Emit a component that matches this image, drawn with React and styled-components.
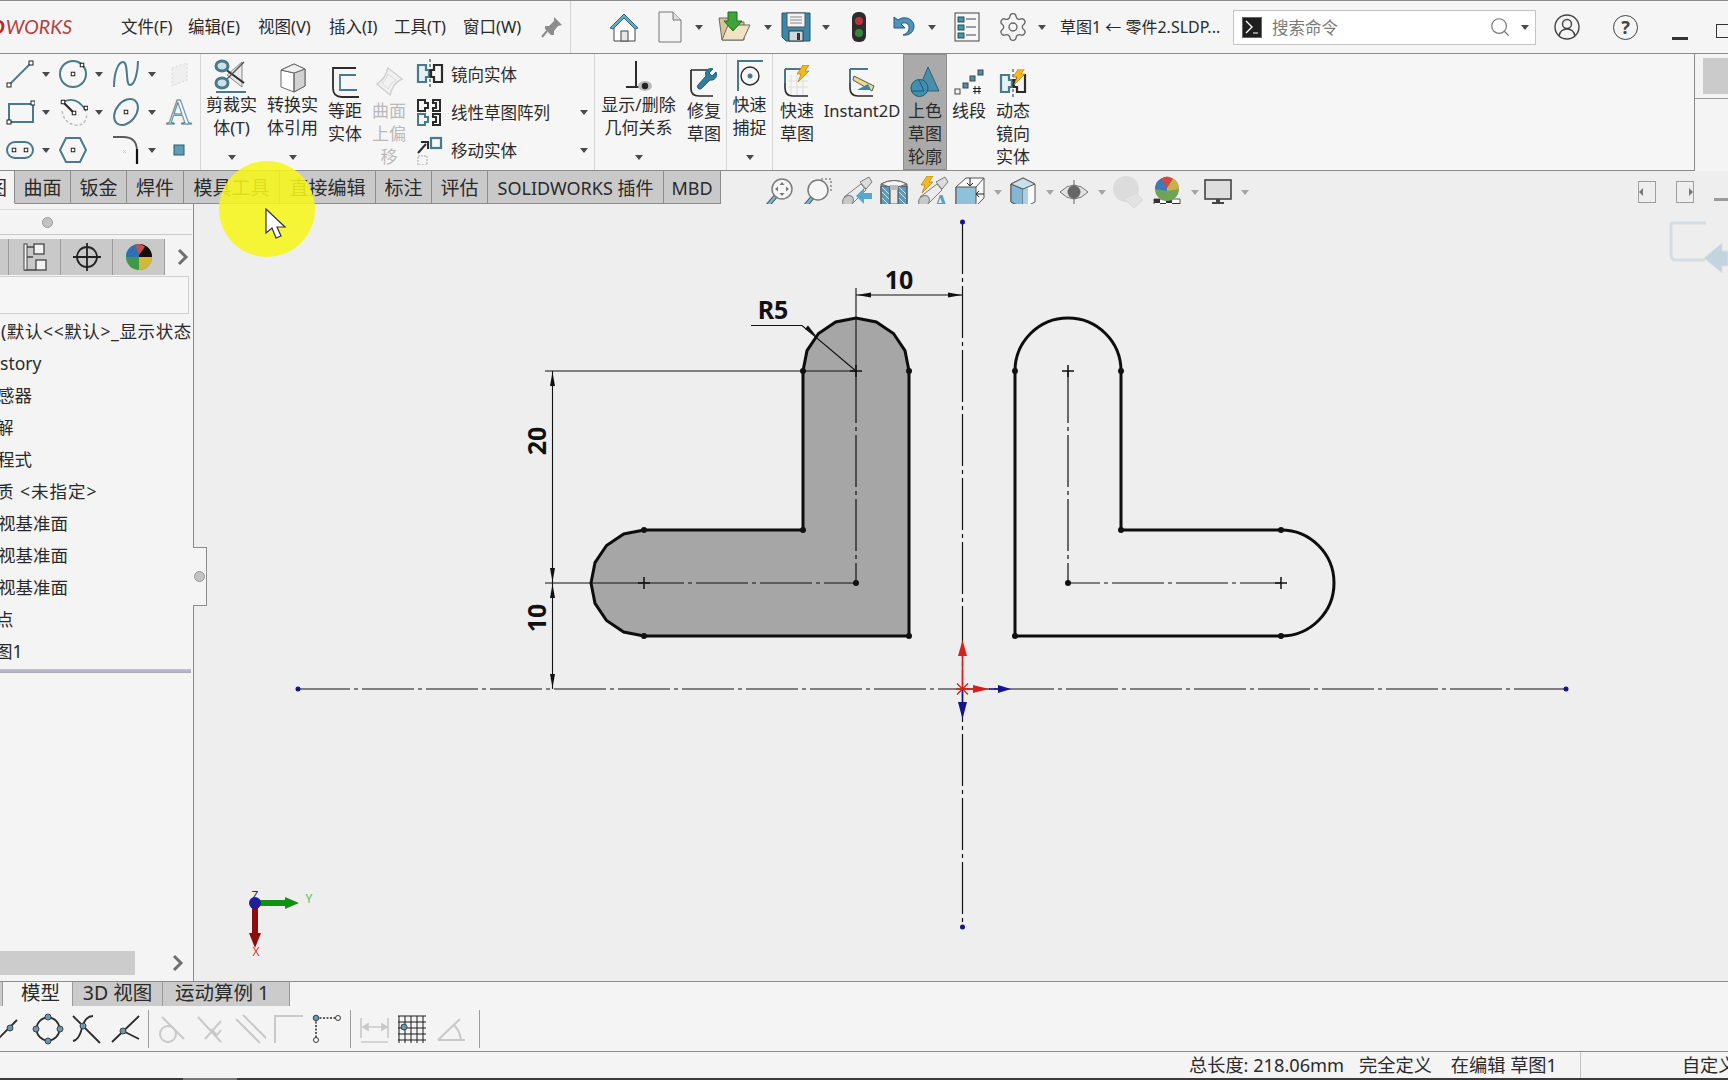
import React from 'react';
import styled, { createGlobalStyle } from 'styled-components';
import { Search, Settings } from 'lucide-react';

const TEAL = '#487a8b';
const DARK = '#2b2b2b';
const FAINT = '#c9c9c9';
const LINE = '#8c8c8c';

const GlobalStyle = createGlobalStyle`
  html, body {
    margin: 0;
    width: 1728px;
    height: 1080px;
    overflow: hidden;
    background: #f4f4f4;
  }
  body {
    font-family: "Noto Sans", "Noto Sans CJK SC", sans-serif;
    color: #2a2a2a;
  }
`;

const Page = styled.div`
  position: relative;
  width: 1728px;
  height: 1080px;
  display: flex;
  flex-direction: column;
  overflow: hidden;
`;

/* ---------- title bar ---------- */
const TitleBar = styled.header`
  box-sizing: border-box;
  height: 54px;
  flex: none;
  display: flex;
  align-items: center;
  border-top: 1px solid ${LINE};
  border-bottom: 1px solid ${LINE};
  background: #f5f5f5;
`;

const Logo = styled.div`
  width: 121px;
  flex: none;
  overflow: hidden;
  font-family: "Lato", sans-serif;
  font-style: italic;
  font-size: 19.5px;
  line-height: 26px;
  color: #b5403f;
  white-space: nowrap;
  b {
    font-weight: 900;
    margin-left: -9px;
    margin-right: 1px;
    color: #c8201f;
  }
`;

const MenuList = styled.nav`
  display: flex;
  width: 450px;
  flex: none;
  height: 52px;
  align-items: center;
  border-right: 1px solid #d2d2d2;
  box-sizing: border-box;
`;

const MenuItem = styled.span`
  width: ${p => p.$w}px;
  flex: none;
  font-size: 16.5px;
  line-height: 24px;
  white-space: nowrap;
`;

const QuickBar = styled.div`
  display: flex;
  align-items: center;
  padding-left: 36px;
  width: 489px;
  flex: none;
  box-sizing: border-box;
`;

const QuickItem = styled.div`
  display: flex;
  align-items: center;
  justify-content: flex-start;
  width: ${p => p.$w}px;
  flex: none;
`;

const Caret = styled.i`
  display: block;
  flex: none;
  width: 0;
  height: 0;
  margin-left: ${p => p.$ml || 0}px;
  border-left: 4px solid transparent;
  border-right: 4px solid transparent;
  border-top: 5px solid ${p => p.$light ? '#a5a5a5' : '#4a4a4a'};
`;

const DocTitle = styled.span`
  width: 173px;
  flex: none;
  font-size: 16px;
  line-height: 24px;
  white-space: nowrap;
  overflow: hidden;
`;

const SearchBox = styled.div`
  box-sizing: border-box;
  width: 303px;
  height: 35px;
  flex: none;
  display: flex;
  align-items: center;
  padding: 0 6px 0 8px;
  background: #fff;
  border: 1px solid #c4c4c4;
`;

const SearchText = styled.span`
  flex: 1;
  padding-left: 10px;
  font-size: 16.5px;
  color: #7a7a7a;
`;

const Prompt = styled.span`
  box-sizing: border-box;
  width: 20px;
  height: 21px;
  flex: none;
  background: #1e1e1e;
  border: 1px solid #666;
  display: flex;
`;

const TitleRight = styled.div`
  display: flex;
  align-items: center;
  padding-left: 18px;
`;

const RoundBtn = styled.span`
  width: 59px;
  flex: none;
  display: flex;
`;

const HelpMark = styled.span`
  box-sizing: border-box;
  width: 25px;
  height: 25px;
  border: 1.5px solid #444;
  border-radius: 50%;
  text-align: center;
  font-size: 18px;
  font-weight: 700;
  line-height: 22px;
  color: #444;
`;

const MinBar = styled.i`
  display: block;
  width: 16px;
  height: 3px;
  margin-top: 22px;
  background: #333;
`;

const MaxBox = styled.i`
  display: block;
  box-sizing: border-box;
  width: 14px;
  height: 14px;
  margin-left: 28px;
  margin-top: 8px;
  border: 1.5px solid #333;
  flex: none;
`;

/* ---------- command manager ---------- */
const RibbonRow = styled.div`
  height: 117px;
  flex: none;
  display: flex;
`;

const Ribbon = styled.section`
  box-sizing: border-box;
  width: 1695px;
  flex: none;
  display: flex;
  background: #f6f6f6;
  border-right: 1px solid ${LINE};
  border-bottom: 1px solid ${LINE};
`;

const RibbonSide = styled.div`
  flex: 1;
  box-sizing: border-box;
  height: 45px;
  padding: 4px 0 4px 8px;
  border-bottom: 1px solid #9a9a9a;
  &::after {
    content: '';
    display: block;
    height: 36px;
    background: #cbcbcb;
  }
`;

const SketchGrid = styled.div`
  box-sizing: border-box;
  width: 201px;
  flex: none;
  display: grid;
  grid-template-columns: 53px 53px 53px 30px;
  grid-auto-rows: 38px;
  padding: 1px 0 0 5px;
  border-right: 1px solid #d6d6d6;
`;

const ToolCell = styled.div`
  display: flex;
  align-items: center;
`;

const RibbonBtn = styled.div`
  box-sizing: border-box;
  width: ${p => p.$w}px;
  flex: none;
  height: 116px;
  display: flex;
  flex-direction: column;
  align-items: center;
  color: ${p => p.$off ? '#b9b9b9' : 'inherit'};
  background: ${p => p.$on ? '#aaaaaa' : 'transparent'};
  outline: ${p => p.$on ? '1px solid #8f8f8f' : 'none'};
  outline-offset: -1px;
  border-right: ${p => p.$sep ? '1px solid #d6d6d6' : '0'};
`;

const IconSlot = styled.div`
  height: ${p => p.$tall ? 45 : 39}px;
  flex: none;
  display: flex;
  align-items: flex-end;
`;

const BtnText = styled.div`
  font-size: ${p => p.$latin ? 16.5 : 17}px;
  line-height: 23px;
  text-align: center;
  white-space: nowrap;
`;

const BtnCaret = styled.div`
  margin-top: auto;
  margin-bottom: 10px;
`;

const SmallCol = styled.div`
  box-sizing: border-box;
  width: 184px;
  flex: none;
  padding: 1px 6px 0 4px;
  border-right: 1px solid #d6d6d6;
`;

const SmallRow = styled.div`
  height: 38px;
  display: flex;
  align-items: center;
  gap: 6px;
  font-size: 16.5px;
  white-space: nowrap;
  i { margin-left: auto; }
`;

/* ---------- tabs + heads-up toolbar ---------- */
const TabRow = styled.div`
  height: 33px;
  flex: none;
  display: flex;
  background: #eeeeee;
`;

const Tab = styled.div`
  box-sizing: border-box;
  width: ${p => p.$w}px;
  flex: none;
  height: 33px;
  text-align: ${p => p.$on ? 'left' : 'center'};
  text-indent: ${p => p.$on ? -12 : 0}px;
  font-size: ${p => p.$size || 19}px;
  line-height: 34px;
  white-space: nowrap;
  overflow: hidden;
  background: ${p => p.$on ? '#f4f4f4' : '#c9c9c9'};
  border-right: 1px solid ${LINE};
  border-bottom: 1px solid ${p => p.$on ? 'transparent' : LINE};
`;

const HeadsUp = styled.div`
  display: flex;
  align-items: center;
  padding-left: 43px;
  width: 917px;
  box-sizing: border-box;
  flex: none;
  height: 42px;
`;

const HeadsItem = styled.div`
  width: ${p => p.$w}px;
  flex: none;
  display: flex;
  align-items: center;
`;

const PaneBtns = styled.div`
  display: flex;
  align-items: center;
  height: 42px;
  flex: 1;
`;

const PaneBtn = styled.span`
  box-sizing: border-box;
  width: 18px;
  height: 22px;
  flex: none;
  margin-right: 20px;
  border: 1px solid #9f9f9f;
  display: flex;
  align-items: center;
  justify-content: ${p => p.$right ? 'flex-end' : 'flex-start'};
  &::before {
    content: '';
    border-top: 4px solid transparent;
    border-bottom: 4px solid transparent;
    ${p => p.$right ? 'border-left: 4px solid #777;' : 'border-right: 4px solid #777;'}
  }
`;

const PaneDash = styled.i`
  display: block;
  flex: none;
  width: 14px;
  height: 3px;
  margin-top: 14px;
  background: #9a9a9a;
`;

/* ---------- feature manager + viewport ---------- */
const WorkRow = styled.main`
  height: 777px;
  flex: none;
  display: flex;
`;

const Sidebar = styled.aside`
  box-sizing: border-box;
  width: 194px;
  flex: none;
  display: flex;
  flex-direction: column;
  overflow: hidden;
  padding-top: 5px;
  background: #f4f4f4;
  border-right: 1px solid ${LINE};
`;

const GripRow = styled.div`
  box-sizing: border-box;
  height: 26px;
  flex: none;
  display: flex;
  align-items: center;
  padding-left: 42px;
  border-top: 1px solid #dcdcdc;
  border-bottom: 1px solid #c9c9c9;
  margin-right: 1px;
`;

const GripDot = styled.i`
  display: block;
  width: 9px;
  height: 9px;
  border-radius: 50%;
  background: #c3c3c3;
  border: 1px solid #999;
`;

const PaneTabs = styled.div`
  display: flex;
  height: 36px;
  flex: none;
  margin-top: 4px;
  margin-left: -43px;
  align-items: stretch;
`;

const PaneTab = styled.div`
  box-sizing: border-box;
  width: 52px;
  flex: none;
  display: flex;
  align-items: center;
  justify-content: center;
  background: #c9c9c9;
  border-right: 1px solid #9c9c9c;
`;

const PaneMore = styled.div`
  flex: 1;
  display: flex;
  align-items: center;
  padding-left: 11px;
`;

const FilterBox = styled.div`
  box-sizing: border-box;
  height: 38px;
  flex: none;
  margin: 1px 4px 1px -2px;
  border: 1px solid #cfcfcf;
  background: #f6f6f6;
`;

const TreeList = styled.ul`
  list-style: none;
  margin: 0;
  padding: 0;
  flex: none;
  overflow: hidden;
  width: 191px;
`;

const TreeRow = styled.li`
  height: 32px;
  font-size: 17.5px;
  line-height: 32px;
  white-space: nowrap;
  margin-left: ${p => p.$shift}px;
  letter-spacing: ${p => p.$track || 0}px;
`;

const TreeEnd = styled.div`
  height: 4px;
  flex: none;
  width: 191px;
  margin-top: 2px;
  background: linear-gradient(#c6c3d2, #a9a7b5);
`;

const HScroll = styled.div`
  margin-top: auto;
  margin-bottom: 6px;
  height: 24px;
  flex: none;
  display: flex;
  align-items: center;
  justify-content: space-between;
  padding-right: 8px;
  &::before {
    content: '';
    height: 24px;
    width: 135px;
    background: #cccccc;
  }
`;

const Viewport = styled.div`
  flex: 1;
  display: flex;
  background: #eeeeee;
`;

const Sash = styled.div`
  position: absolute;
  left: 193px;
  top: 547px;
  box-sizing: border-box;
  width: 14px;
  height: 59px;
  display: flex;
  align-items: center;
  justify-content: center;
  background: #f4f4f4;
  border: 1px solid ${LINE};
  border-left: 0;
`;

const DimText = styled.text`
  font-family: "Noto Sans", sans-serif;
  font-weight: 700;
  font-size: 25px;
  fill: #111;
  text-anchor: middle;
`;

const AxisLabel = styled.text`
  font-family: "Noto Sans", sans-serif;
  font-size: 12px;
  fill: ${p => p.$c};
  text-anchor: middle;
`;

/* ---------- bottom ---------- */
const BottomTabs = styled.div`
  box-sizing: border-box;
  height: 25px;
  flex: none;
  display: flex;
  border-top: 1px solid ${LINE};
`;

const SheetTab = styled.div`
  box-sizing: border-box;
  width: ${p => p.$w}px;
  flex: none;
  text-align: center;
  padding-left: ${p => p.$pl || 0}px;
  padding-right: ${p => p.$pr || 0}px;
  font-size: 19.5px;
  line-height: 22px;
  background: ${p => p.$on ? '#f4f4f4' : '#cbcbcb'};
  border-right: 1px solid #9a9a9a;
  white-space: nowrap;
`;

const RelationBar = styled.div`
  box-sizing: border-box;
  height: 46px;
  flex: none;
  display: flex;
  align-items: center;
  border-bottom: 1px solid ${LINE};
  overflow: hidden;
`;

const RelationCell = styled.div`
  width: ${p => p.$w}px;
  flex: none;
  display: flex;
  justify-content: center;
  margin-left: ${p => p.$ml || 0}px;
`;

const RelationSep = styled.i`
  display: block;
  flex: none;
  width: 1px;
  height: 38px;
  margin: 0 3px 0 ${p => p.$ml || 3}px;
  background: #9d9d9d;
`;

const StatusBar = styled.footer`
  height: 26px;
  flex: none;
  display: flex;
  align-items: center;
  padding-left: 1189px;
  font-size: 18.2px;
  line-height: 26px;
  white-space: nowrap;
  overflow: hidden;
`;

const StatusItem = styled.span`
  flex: none;
  margin-right: ${p => p.$mr}px;
`;

const StatusSep = styled.i`
  display: block;
  flex: none;
  width: 1px;
  height: 26px;
  background: #c4c4c4;
  margin-right: 101px;
`;

const TaskEdge = styled.div`
  height: 2px;
  flex: none;
  background: linear-gradient(90deg, #3a3a3a 183px, #777 183px, #777 237px, #3a3a3a 237px);
`;

/* ---------- presentation cursor ---------- */
const Spotlight = styled.div`
  position: absolute;
  left: 219px;
  top: 161px;
  width: 96px;
  height: 96px;
  border-radius: 50%;
  background: radial-gradient(circle, rgba(246, 246, 28, 0.88) 94%, rgba(246, 246, 28, 0.3) 100%);
  pointer-events: none;
`;

const Pointer = styled.svg`
  position: absolute;
  left: 265px;
  top: 208px;
`;

/* ---------- icons ---------- */
const Ic = ({ w = 30, h = 30, children, op }) => (
  <svg width={w} height={h} viewBox={`0 0 ${w} ${h}`} fill="none" style={op ? { opacity: op } : undefined}>
    {children}
  </svg>
);

const Node = ({ x, y, s = 4 }) => (
  <rect x={x - s / 2} y={y - s / 2} width={s} height={s} fill="#fff" stroke="#222" strokeWidth="1" />
);

const Bolt = ({ x = 0, y = 0 }) => (
  <polygon
    transform={`translate(${x} ${y})`}
    points="8,0 14,0 10,6 14,6 3,17 6,9 2,9"
    fill="#f6b91d"
    stroke="#b07a10"
    strokeWidth=".7"
  />
);

const Corner = ({ top = TEAL }) => (
  <>
    <path d="M3 4v19q0 8 8 8h15" stroke={DARK} strokeWidth="1.6" />
    <path d="M3 4h18" stroke={top} strokeWidth="2" />
    <path d="M3 4v14" stroke={top} strokeWidth="2" />
  </>
);

const LineIcon = () => <Ic><path d="M4 26 26 4" stroke={TEAL} strokeWidth="1.8" /><Node x={4} y={26} /><Node x={26} y={4} /></Ic>;
const CircleIcon = () => <Ic><circle cx="15" cy="15" r="13" stroke={TEAL} strokeWidth="2" /><Node x={15} y={15} s={3.5} /><Node x={24} y={6} s={3.5} /></Ic>;
const SplineIcon = () => <Ic><path d="M3 28C3 14 7 3 12 3c6 0 2 23 7 23 5 0 8-14 8-24" stroke={TEAL} strokeWidth="2" /></Ic>;
const GhostIcon = () => <Ic op=".4"><path d="M8 9l15-5v17L8 27z" fill="#e6e6e6" stroke="#aaa" strokeDasharray="2 2" /></Ic>;
const RectIcon = () => <Ic><rect x="4" y="7" width="24" height="18" stroke={TEAL} strokeWidth="2" /><Node x={4} y={25} /><Node x={28} y={6} /></Ic>;
const ArcIcon = () => (
  <Ic>
    <path d="M5 5q14-7 23 9" stroke={TEAL} strokeWidth="1.6" />
    <path d="M4 14q2 12 13 14t12-12" stroke="#bdbdbd" strokeWidth="1.5" strokeDasharray="3 2" />
    <path d="M6 6 16 16" stroke={DARK} strokeWidth="2.2" />
    <Node x={5} y={5} s={3.5} /><Node x={16} y={16} s={3.5} /><Node x={28} y={11} s={3.5} />
  </Ic>
);
const EllipseIcon = () => <Ic><ellipse cx="15" cy="15" rx="10" ry="14.5" transform="rotate(38 15 15)" stroke={TEAL} strokeWidth="2" /><Node x={15} y={15} s={3.5} /></Ic>;
const TextIcon = () => (
  <Ic>
    <text x="15" y="27" textAnchor="middle" fontFamily="Liberation Serif, serif" fontSize="35" fill="#fff" stroke={TEAL} strokeWidth=".9">A</text>
  </Ic>
);
const SlotIcon = () => <Ic><rect x="2" y="7" width="26" height="16" rx="8" stroke={TEAL} strokeWidth="2" /><Node x={9} y={15} s={3.5} /><Node x={21} y={15} s={3.5} /></Ic>;
const HexIcon = () => <Ic><path d="M8 3h14l6 12-6 12H8L2 15z" stroke={TEAL} strokeWidth="2" /><Node x={15} y={15} s={3.5} /></Ic>;
const FilletIcon = () => (
  <Ic>
    <path d="M2 2h10q14 0 14 14" stroke="#5a5a5a" strokeWidth="1.8" />
    <path d="M26 14v15" stroke="#111" strokeWidth="2.2" />
    <path d="M12 15l3 3M15 15l-3 3" stroke="#ccc" />
  </Ic>
);
const PointIcon = () => <Ic><rect x="10" y="10" width="10" height="10" fill="#5e9db4" stroke="#2b5a6c" /></Ic>;

const ScissorsIcon = () => (
  <Ic w={36} h={34}>
    <path d="M28 3v25L13 16z" fill="#e9e9e9" stroke="#888" />
    <path d="M11 10 30 24" stroke={DARK} strokeWidth="2" />
    <path d="M11 22 30 3" stroke="#555" strokeWidth="1.5" />
    <ellipse cx="8" cy="7" rx="6" ry="5" fill="#cfe0e7" stroke={TEAL} strokeWidth="3" />
    <ellipse cx="8" cy="24" rx="6" ry="5" fill="#cfe0e7" stroke={TEAL} strokeWidth="3" />
    <path d="M2 33h30" stroke={TEAL} strokeWidth="2" />
  </Ic>
);
const CubeIcon = () => (
  <Ic w={30} h={32}>
    <path d="M3 9 16 3l11 5v17l-11 6-13-5z" fill="#fff" stroke="#666" />
    <path d="M16 12 27 8v17l-11 6z" fill="#d2d2d2" stroke="#666" />
    <path d="M3 9l13 3v19" stroke="#666" />
    <path d="M3 9l13 3 11-4-11-5z" fill="#f0f0f0" stroke="#666" />
  </Ic>
);
const OffsetIcon = () => (
  <Ic w={30} h={34}>
    <path d="M26 3H3v20q0 9 9 9h17" stroke={DARK} strokeWidth="1.8" />
    <path d="M26 10H10v15h17" stroke={TEAL} strokeWidth="1.8" />
  </Ic>
);
const SurfaceIcon = () => (
  <Ic w={30} h={34} op=".6">
    <path d="M14 3 28 14q-9 4-12 16L3 19q9-6 11-16z" fill="#efefef" stroke="#b9b9b9" strokeWidth="1.5" />
    <path d="M14 9l8 6q-6 3-8 9l-6-6q5-4 6-9z" stroke="#c8c8c8" />
  </Ic>
);
const MirrorIcon = ({ bolt }) => (
  <Ic w={30} h={30}>
    <path d="M3 6h8v5h3v7h-3v5H3z" stroke={TEAL} strokeWidth="2.2" fill="#e4f0f4" />
    <path d="M27 6h-8v5h-3v7h3v5h8z" stroke={DARK} strokeWidth="2.2" />
    <path d="M15 0v30" stroke={DARK} strokeDasharray="3 2" />
    {bolt && <Bolt x={13} y={-1} />}
  </Ic>
);
const PatternIcon = () => (
  <Ic>
    <path d="M3 3h7v3h3v5h-3v3H3z" stroke={DARK} strokeWidth="2" />
    <path d="M3 17h7v3h3v5h-3v3H3z" stroke={TEAL} strokeWidth="2" />
    <path d="M18 3h7v11h-7v-3h3V6h-3z" stroke={DARK} strokeWidth="2" />
    <path d="M18 17h7v11h-7v-3h3v-5h-3z" stroke={DARK} strokeWidth="2" />
  </Ic>
);
const MoveIcon = () => (
  <Ic>
    <rect x="16" y="3" width="10" height="10" stroke={TEAL} strokeWidth="2.2" />
    <path d="M3 18 11 9M6 7h7v7" stroke={DARK} strokeWidth="2" />
    <rect x="3" y="21" width="9" height="9" stroke="#aaa" strokeDasharray="2 1" />
  </Ic>
);
const RelationIcon = () => (
  <Ic w={34} h={34}>
    <path d="M14 2v26M4 28h18" stroke={DARK} strokeWidth="2" />
    <ellipse cx="23" cy="27" rx="7" ry="5" fill="#bbb" />
    <circle cx="23" cy="27" r="3.2" fill="#222" />
  </Ic>
);
const RepairIcon = () => (
  <Ic w={32} h={34}>
    <path d="M3 5h19M3 5v19q0 7 8 7h14" stroke={DARK} strokeWidth="1.7" />
    <path d="M28 7l-4 4-3-3 4-4c-5-2-9 3-7 7L10 20c-2 2 1 6 4 3l8-8c4 1 8-3 6-8z" fill="#2f7ea0" stroke="#1f5a73" />
  </Ic>
);
const SnapIcon = () => (
  <Ic w={30} h={34}>
    <path d="M2 2h26" stroke={TEAL} strokeWidth="2" />
    <path d="M3 2v30" stroke={TEAL} strokeWidth="2" />
    <circle cx="15" cy="17" r="9" stroke={DARK} strokeWidth="1.4" />
    <circle cx="15" cy="17" r="2.5" fill={TEAL} />
  </Ic>
);
const QuickSketchIcon = () => (
  <Ic w={30} h={34}>
    <Corner />
    <path d="M9 10v20M15 10v20M21 10v20M6 16h20M6 22h20" stroke="#ddd" />
    <Bolt x={13} y={0} />
  </Ic>
);
const Instant2DIcon = () => (
  <Ic w={30} h={34}>
    <Corner />
    <path d="M7 11 27 21l-2 5L6 15z" fill="#f0d98a" stroke="#555" />
    <path d="M10 25h14l-3-6z" fill="#3c86a2" />
  </Ic>
);
const ShadedIcon = () => (
  <Ic w={30} h={34}>
    <path d="M18 2 29 26H8z" fill="#4a8eaa" stroke="#2c6278" />
    <circle cx="9.5" cy="23" r="8.5" fill="#3f8fb0" stroke="#1d5a73" />
    <path d="M9 15 14 26H1" stroke="#1d5a73" />
  </Ic>
);
const SegmentIcon = () => (
  <Ic w={30} h={34}>
    <rect x="1" y="24" width="5" height="5" stroke="#444" />
    <rect x="9" y="18" width="5" height="5" fill="#4c8fa8" stroke="#444" />
    <rect x="16" y="11" width="5" height="5" fill="#4c8fa8" stroke="#444" />
    <rect x="24" y="5" width="5" height="5" fill="#4c8fa8" stroke="#444" />
    <path d="M21 21v8M25 21v8M19 23.5h8M19 26.5h8" stroke="#222" />
  </Ic>
);

const HomeIcon = () => (
  <Ic w={34} h={34}>
    <path d="M7 15v16h21V15" fill="#fff" stroke="#444" />
    <rect x="14" y="21" width="7" height="10" fill="#e8e8e8" stroke="#444" />
    <path d="M3 18 17 4l14 14-3 1L17 8 6 19z" fill="#6aa8c4" stroke="#2c6a84" />
  </Ic>
);
const FileIcon = () => (
  <Ic w={26} h={34}>
    <path d="M2 2h14l8 8v22H2z" fill="#f4f4f4" stroke="#777" />
    <path d="M16 2v8h8" fill="#ddd" stroke="#777" />
  </Ic>
);
const OpenIcon = () => (
  <Ic w={34} h={34}>
    <path d="M2 8h12l3 4h10v18H5z" fill="#d8c49a" stroke="#6b6b5f" />
    <path d="M5 30 11 15h22l-7 15z" fill="#efe3c4" stroke="#6b6b5f" />
    <path d="M11 2h9v9h5L16 21 7 11h4z" fill="#3ea33a" stroke="#1e6b1e" />
  </Ic>
);
const SaveIcon = () => (
  <Ic w={32} h={34}>
    <path d="M2 3h28v28H6l-4-4z" fill="#3c86aa" stroke="#20566f" />
    <rect x="7" y="3" width="18" height="14" fill="#f3f3f3" stroke="#555" />
    <path d="M10 7h12M10 10h12M10 13h12" stroke="#888" />
    <rect x="9" y="21" width="14" height="10" fill="#cfd8dc" stroke="#333" />
    <rect x="17" y="23" width="3" height="7" fill="#333" />
  </Ic>
);
const TrafficIcon = () => (
  <Ic w={16} h={32}>
    <rect x="1" y="1" width="14" height="30" rx="6" fill="#2d2d2d" />
    <circle cx="8" cy="10" r="4" fill="#c0323b" />
    <circle cx="8" cy="22" r="4" fill="#35883a" />
  </Ic>
);
const UndoIcon = () => (
  <Ic w={24} h={24}>
    <path d="M3 2v11h11L10 9c4-3 9 0 8 5-.5 3-3 5-6 6 6 1 11-3 11-9C23 4 13 0 7 5z" fill="#4e93bf" stroke="#22597c" />
  </Ic>
);
const ListIcon = () => (
  <Ic w={26} h={32}>
    <rect x="1" y="2" width="24" height="28" fill="#f7f7f7" stroke="#444" />
    <rect x="4" y="6" width="6" height="5" fill="#4c8fa8" stroke="#255" />
    <rect x="4" y="14" width="6" height="5" fill="#4c8fa8" stroke="#255" />
    <rect x="4" y="22" width="6" height="5" fill="#4c8fa8" stroke="#255" />
    <path d="M12 8h10M12 16h10M12 24h10" stroke="#444" />
  </Ic>
);
const UserIcon = () => (
  <Ic w={26} h={26}>
    <circle cx="13" cy="13" r="12" stroke="#444" strokeWidth="1.4" />
    <circle cx="13" cy="10" r="4.5" stroke="#444" strokeWidth="1.4" />
    <path d="M5 22c1-5 4-7 8-7s7 2 8 7" stroke="#444" strokeWidth="1.4" />
  </Ic>
);
const PromptGlyph = () => (
  <svg width="18" height="19" viewBox="0 0 18 19" fill="none">
    <path d="M3 3l6 6-6 6" stroke="#fff" strokeWidth="1.4" />
    <path d="M10 15h5" stroke="#fff" />
  </svg>
);

const Handle = ({ d }) => (
  <>
    <path d={d} stroke="#45697a" strokeWidth="4.5" strokeLinecap="round" />
    <path d={d} stroke="#8fb6c8" strokeWidth="2" strokeLinecap="round" />
  </>
);
const ZoomFitIcon = () => (
  <Ic w={30} h={32}>
    <Handle d="M11 21 4 29" />
    <circle cx="18" cy="13" r="10" fill="#f6f6f6" stroke="#7c7c7c" strokeWidth="1.5" />
    <path d="M11 13l3-2.5v5zM25 13l-3-2.5v5zM18 6l-2.500 3h5zM18 20l-2.500-3h5z" fill="#777" />
  </Ic>
);
const ZoomBoxIcon = () => (
  <Ic w={30} h={32}>
    <path d="M18 3h10v13" stroke="#555" strokeDasharray="2 2" />
    <Handle d="M9 22 3 29" />
    <circle cx="15" cy="14" r="10" fill="#f6f6f6" stroke="#7c7c7c" strokeWidth="1.5" />
  </Ic>
);
const BinoIcon = ({ a }) => (
  <Ic w={32} h={32}>
    <path d="M3 21 20 8l5 6-13 13z" fill="#ececec" stroke="#7c7c7c" />
    <path d="M19 6 28 1l3 5-6 7z" fill="#dcdcdc" stroke="#7c7c7c" />
    <ellipse cx="7" cy="25" rx="5" ry="6" transform="rotate(40 7 25)" fill="#c8c8c8" stroke="#7c7c7c" />
    {a
      ? <><Bolt x={2} y={0} /><text x="24" y="32" textAnchor="middle" fontFamily="Liberation Serif, serif" fontSize="18" fontWeight="700" fill="#5d9bb6">A</text></>
      : <path d="M31 17H23v-5l-8 8 8 8v-5h8z" fill="#5aa6cd" />}
  </Ic>
);
const SectionIcon = () => (
  <Ic w={30} h={32}>
    <path d="M2 8q13-7 26 0v20H2z" fill="#e8e8e8" stroke="#666" />
    <path d="M2 10h9v20H2zM19 10h9v20h-9z" fill="#5f9ab4" stroke="#444" />
    <path d="M3 16l7 7M3 22l7 7M3 11l7 7M20 16l7 7M20 22l7 7M20 11l7 7" stroke="#cfe2ea" />
    <path d="M2 8q13-7 26 0-13 6-26 0z" fill="#f5f5f5" stroke="#666" />
    <path d="M11 9h8v5h-8z" fill="#bbb" />
  </Ic>
);
const OrientIcon = () => (
  <Ic w={30} h={32}>
    <path d="M1 11 11 2h18v20l-8 8H1z" fill="#f8f8f8" stroke="#555" />
    <path d="M1 11h20v19H1z" fill="#8fc1d8" stroke="#555" />
    <path d="M21 11 29 2" stroke="#555" />
    <path d="M15 2v8M12 7l3 3 3-3M29 18h-8M24 15l-3 3 3 3" stroke="#222" />
  </Ic>
);
const DisplayCubeIcon = () => (
  <Ic w={28} h={32}>
    <path d="M2 8 14 2l12 6v18l-12 6-12-6z" fill="#fafafa" stroke="#555" />
    <path d="M2 8l12 5v19L2 26z" fill="#84b8d2" stroke="#555" />
    <path d="M14 13v19h5V11z" fill="#a8cfe2" />
    <path d="M2 8 14 2l12 6-12 5z" fill="#c9e0eb" stroke="#555" />
  </Ic>
);
const EyeIcon = () => (
  <Ic w={30} h={32}>
    <path d="M1 16q14-14 28 0-14 14-28 0z" fill="#e2e2e2" stroke="#777" />
    <circle cx="15" cy="16" r="6.5" fill="#666" />
    <path d="M15 4v24" stroke="#666" />
  </Ic>
);
const BulbIcon = () => (
  <Ic w={32} h={34} op=".42">
    <circle cx="14" cy="14" r="13" fill="#c4c4c4" />
    <path d="M12 24 24 18l7 7-9 8z" fill="#d2d2d2" stroke="#bbb" />
  </Ic>
);
const SceneIcon = () => (
  <Ic w={30} h={34}>
    <path d="M2 24h26v9H2z" fill="#fff" stroke="#555" />
    <path d="M2 24h6v4H2zM14 24h6v4h-6zM8 28h6v5H8zM20 28h8v5h-8z" fill="#333" />
    <circle cx="15" cy="14" r="12" fill="#6ea457" />
    <path d="M15 2a12 12 0 0 1 12 12l-12 2z" fill="#c9b04a" />
    <path d="M15 2A12 12 0 0 0 3 14l12 2z" fill="#3f78bb" />
    <path d="M9 4q6-5 12 0l-6 9z" fill="#cd4a45" />
  </Ic>
);
const MonitorIcon = () => (
  <Ic w={28} h={28}>
    <rect x="1" y="2" width="26" height="19" fill="#dedede" stroke="#444" strokeWidth="1.6" />
    <path d="M12 21h4v3h4v2H8v-2h4z" fill="#444" />
  </Ic>
);

const Dot = ({ x, y, r = 3 }) => <circle cx={x} cy={y} r={r} fill="#6f97a8" stroke="#345" />;
const Ring = ({ x, y }) => <circle cx={x} cy={y} r="2.5" fill="#fff" stroke="#333" />;

const TangentLine = () => <Ic><path d="M2 27 23 6" stroke={DARK} strokeWidth="1.8" /><Dot x={16} y={14} /></Ic>;
const FourPoint = () => (
  <Ic w={32} h={32}>
    <circle cx="16" cy="16" r="11.5" stroke={DARK} strokeWidth="1.8" />
    <Dot x={16} y={4} /><Dot x={16} y={28} /><Dot x={4} y={16} /><Dot x={28} y={16} />
  </Ic>
);
const CrossCurve = () => <Ic w={32} h={32}><path d="M2 3 29 30" stroke={DARK} strokeWidth="1.8" /><path d="M2 28q6-1 9-13T22 3" stroke={DARK} strokeWidth="1.8" /><Dot x={12} y={13} /></Ic>;
const Bisect = () => <Ic w={32} h={32}><path d="M2 29 29 3M13 18l16 8" stroke={DARK} strokeWidth="1.8" /><Dot x={13} y={18} /></Ic>;
const FadedTangent = () => <Ic w={32} h={32}><circle cx="12" cy="21" r="8" stroke={FAINT} strokeWidth="2" /><path d="M6 4 28 26" stroke={FAINT} strokeWidth="2" /></Ic>;
const FadedPerp = () => <Ic w={32} h={32}><path d="M3 4 26 29M10 26 26 8M16 16l6 6 4-5" stroke={FAINT} strokeWidth="2" /></Ic>;
const FadedParallel = () => <Ic w={32} h={32}><path d="M2 6 26 30M9 2l24 24" stroke={FAINT} strokeWidth="2" /></Ic>;
const FadedSquare = () => <Ic w={32} h={32}><path d="M2 30V3h28" stroke={FAINT} strokeWidth="2" /></Ic>;
const DottedL = () => (
  <Ic w={32} h={32}>
    <path d="M4 5h20M4 5v21" stroke={DARK} strokeDasharray="2 1.5" strokeWidth="1.5" />
    <Dot x={4} y={5} r={2.8} /><Ring x={26} y={5} /><Ring x={4} y={27} />
  </Ic>
);
const FadedDim = () => <Ic w={32} h={32}><path d="M3 5v20M30 5v20M3 29h27M5 14h24M5 14l5-3v6zM29 14l-5-3v6z" stroke={FAINT} strokeWidth="1.6" fill={FAINT} /></Ic>;
const GridIcon = () => (
  <Ic w={30} h={32}>
    <path d="M1 3v27M7 3v27M13 3v27M19 3v27M25 3v27M0 3h28M0 9h28M0 15h28M0 21h28M0 27h28" stroke="#1d1d1d" />
    <Dot x={6} y={14} />
  </Ic>
);
const FadedAngle = () => <Ic w={32} h={32}><path d="M2 27h27M2 27 24 6M18 12q6 6 7 15" stroke={FAINT} strokeWidth="2" /></Ic>;
const TreeIcon = () => (
  <Ic w={24} h={30}>
    <rect x="11" y="2" width="10" height="10" fill="#f2f2f2" stroke="#444" strokeWidth="1.3" />
    <rect x="13" y="18" width="10" height="10" fill="#f2f2f2" stroke="#444" strokeWidth="1.3" />
    <path d="M2 2v26h11M2 5h9M2 15h8" stroke="#444" strokeWidth="1.3" />
    <rect x="1" y="2" width="3" height="26" fill="#f2f2f2" stroke="#444" />
  </Ic>
);
const TargetIcon = () => (
  <Ic w={28} h={28}>
    <circle cx="14" cy="14" r="10" stroke="#222" strokeWidth="1.8" />
    <path d="M14 0v28M0 14h28" stroke="#222" strokeWidth="1.8" />
  </Ic>
);
const GlobeIcon = () => (
  <Ic w={28} h={28}>
    <circle cx="14" cy="14" r="13" fill="#3f9a45" />
    <path d="M14 14V1A13 13 0 0 0 1 14z" fill="#2f6fb8" />
    <path d="M14 14h13A13 13 0 0 1 14 27z" fill="#d2b93a" />
    <path d="M14 14V1a13 13 0 0 1 13 13z" fill="#160c0c" />
    <path d="M10 2q6-3 10 2l-6 8z" fill="#c5504a" />
  </Ic>
);
const Chevron = () => (
  <svg width="14" height="20" viewBox="0 0 14 20" fill="none">
    <path d="M3 3l7 7-7 7" stroke="#6f6f6f" strokeWidth="3" />
  </svg>
);
const Pin = () => (
  <Ic w={22} h={22}>
    <path d="M13 1l8 8-4 1-4 5 0 4-3 0-6-6 0-3 4 0 5-5z" fill="#8d8d8d" />
    <path d="M6 15l-5 6" stroke="#8d8d8d" strokeWidth="2" />
  </Ic>
);

/* ---------- sketch, drawn in page coordinates ---------- */
// the shaded contour is tessellated in the reference, 22.5 degrees a facet
const arcFacets = (cx, cy, r, from) => Array.from({ length: 9 }, (_, i) => {
  const a = (from + i * 22.5) * Math.PI / 180;
  return `${(cx + r * Math.cos(a)).toFixed(1)} ${(cy + r * Math.sin(a)).toFixed(1)}`;
}).join(' L');

const shadedPath = `M644 530H803V371 L${arcFacets(856, 371, 53, 180)} V636H644 L${arcFacets(644, 583, 53, 90)}Z`;

const Vertex = ({ x, y }) => <circle cx={x} cy={y} r="3" fill="#111" />;
const Plus = ({ x, y }) => <path d={`M${x - 6} ${y}h12M${x} ${y - 6}v12`} stroke="#111" strokeWidth="1.5" />;
const ArrowTip = ({ x, y, dir }) => {
  const pts = {
    l: `${x},${y} ${x + 14},${y - 2.5} ${x + 14},${y + 2.5}`,
    r: `${x},${y} ${x - 14},${y - 2.5} ${x - 14},${y + 2.5}`,
    u: `${x},${y} ${x - 2.5},${y + 14} ${x + 2.5},${y + 14}`,
    d: `${x},${y} ${x - 2.5},${y - 14} ${x + 2.5},${y - 14}`,
  };
  return <polygon points={pts[dir]} fill="#111" />;
};

const SketchCanvas = () => (
  <svg width="1534" height="777" viewBox="194 204 1534 777" fill="none">
    {/* centrelines */}
    <path d="M298 689H1566" stroke="#111" strokeWidth="1.2" strokeDasharray="52 4 4 4" />
    <path d="M962.5 222V927" stroke="#111" strokeWidth="1.2" strokeDasharray="52 4 4 4" />
    <circle cx="298" cy="689" r="2.5" fill="#14148c" />
    <circle cx="1566" cy="689" r="2.5" fill="#14148c" />
    <circle cx="962.5" cy="222" r="2.5" fill="#14148c" />
    <circle cx="962.5" cy="927" r="2.5" fill="#14148c" />

    {/* shaded contour */}
    <path d={shadedPath} fill="#a6a6a6" stroke="#0d0d0d" strokeWidth="3" />
    <path d="M856 371V583H644" stroke="#111" strokeWidth="1.2" strokeDasharray="52 4 4 4" />
    <Plus x={644} y={583} />
    <Plus x={856} y={371} />
    {[[644, 530], [803, 530], [803, 371], [909, 371], [909, 636], [644, 636], [856, 583]].map(([x, y]) => (
      <Vertex key={`${x}-${y}`} x={x} y={y} />
    ))}

    {/* open contour */}
    <path d="M1121 371V530H1281A53 53 0 0 1 1281 636H1015V371A53 53 0 0 1 1121 371Z" stroke="#0d0d0d" strokeWidth="3" />
    <path d="M1068 371V583H1281" stroke="#111" strokeWidth="1.2" strokeDasharray="52 4 4 4" />
    <Plus x={1068} y={371} />
    <Plus x={1281} y={583} />
    {[[1121, 371], [1015, 371], [1121, 530], [1281, 530], [1281, 636], [1015, 636], [1068, 583]].map(([x, y]) => (
      <Vertex key={`${x}-${y}`} x={x} y={y} />
    ))}

    {/* dimensions */}
    <g stroke="#111" strokeWidth="1.1">
      <path d="M856 288V371M856 295H962" />
      <path d="M545 371H856M545 583H644" />
      <path d="M552.5 371V689" />
      <path d="M751 325.5H802L856 371" />
    </g>
    <ArrowTip x={857} y={295} dir="l" />
    <ArrowTip x={962} y={295} dir="r" />
    <ArrowTip x={552.5} y={372} dir="u" />
    <ArrowTip x={552.5} y={582} dir="d" />
    <ArrowTip x={552.5} y={584} dir="u" />
    <ArrowTip x={552.5} y={688} dir="d" />
    <polygon points="817,337 805,329 808,325.5" fill="#111" />
    <DimText x="899" y="289">10</DimText>
    <DimText x="773" y="319">R5</DimText>
    <DimText transform="translate(546 441) rotate(-90)">20</DimText>
    <DimText transform="translate(546 618) rotate(-90)">10</DimText>

    {/* origin */}
    <path d="M962.5 689V652" stroke="#d62020" strokeWidth="1.6" />
    <polygon points="962.5,640 958,656 967,656" fill="#d62020" />
    <path d="M962.5 689H976" stroke="#d62020" strokeWidth="1.6" />
    <polygon points="989,689 973,685 973,693" fill="#d62020" />
    <path d="M989 689H1008" stroke="#14148c" strokeWidth="1.6" />
    <polygon points="1011,689 998,685 998,693" fill="#14148c" />
    <path d="M962.5 689V705" stroke="#14148c" strokeWidth="1.6" />
    <polygon points="962.5,719 958,702 967,702" fill="#14148c" />
    <path d="M957 683.5 968 694.5M968 683.5 957 694.5M956 689H969" stroke="#d62020" strokeWidth="1.4" />

    {/* triad */}
    <path d="M255 903H286" stroke="#119111" strokeWidth="6" />
    <polygon points="299,903 285,897 285,909" fill="#119111" />
    <path d="M255 903V935" stroke="#8f0c0c" strokeWidth="6" />
    <polygon points="255,948 249,933 261,933" fill="#8f0c0c" />
    <circle cx="255" cy="903" r="6" fill="#1f1f9e" />
    <AxisLabel $c="#1f1f9e" x="255" y="900">Z</AxisLabel>
    <AxisLabel $c="#55c255" x="309" y="903">Y</AxisLabel>
    <AxisLabel $c="#d23a3a" x="256" y="956">X</AxisLabel>

    {/* confirmation corner */}
    <path d="M1706 223H1673q-2 0-2 2v30q0 5 6 5h28" stroke="#d5dde2" strokeWidth="3" />
    <path d="M1704 258 1722 243V251H1728V266H1722V273Z" fill="#c3d4df" stroke="#d9e1e6" />
  </svg>
);

const tabs = [
  { label: '图', w: 15, on: true },
  { label: '曲面', w: 56 },
  { label: '钣金', w: 56 },
  { label: '焊件', w: 57 },
  { label: '模具工具', w: 96 },
  { label: '直接编辑', w: 96 },
  { label: '标注', w: 56 },
  { label: '评估', w: 56 },
  { label: 'SOLIDWORKS 插件', w: 176, size: 18 },
  { label: 'MBD', w: 57, size: 18 },
];

const sketchTools = [
  [LineIcon, true], [CircleIcon, true], [SplineIcon, true], [GhostIcon, false],
  [RectIcon, true], [ArcIcon, true], [EllipseIcon, true], [TextIcon, false],
  [SlotIcon, true], [HexIcon, false], [FilletIcon, true], [PointIcon, false],
];

const treeRows = [
  { label: '(默认<<默认>_显示状态', shift: 1, track: 0.6 },
  { label: 'story', shift: 0 },
  { label: '感器', shift: -3 },
  { label: '解', shift: -4 },
  { label: '程式', shift: -3 },
  { label: '质 <未指定>', shift: -4, track: 1 },
  { label: '视基准面', shift: -2 },
  { label: '视基准面', shift: -2 },
  { label: '视基准面', shift: -2 },
  { label: '点', shift: -4 },
  { label: '图1', shift: -5 },
];

function App() {
  return (
    <Page>
      <GlobalStyle />
      <TitleBar>
        <Logo><b>D</b>WORKS</Logo>
        <MenuList>
          <MenuItem $w={67}>文件(F)</MenuItem>
          <MenuItem $w={70}>编辑(E)</MenuItem>
          <MenuItem $w={71}>视图(V)</MenuItem>
          <MenuItem $w={65}>插入(I)</MenuItem>
          <MenuItem $w={69}>工具(T)</MenuItem>
          <MenuItem $w={78}>窗口(W)</MenuItem>
          <Pin />
        </MenuList>
        <QuickBar>
          <QuickItem $w={50}><HomeIcon /></QuickItem>
          <QuickItem $w={60}><FileIcon /><Caret $ml={12} /></QuickItem>
          <QuickItem $w={63}><OpenIcon /><Caret $ml={13} /></QuickItem>
          <QuickItem $w={71}><SaveIcon /><Caret $ml={10} /></QuickItem>
          <QuickItem $w={40}><TrafficIcon /></QuickItem>
          <QuickItem $w={63}><UndoIcon /><Caret $ml={13} /></QuickItem>
          <QuickItem $w={43}><ListIcon /></QuickItem>
          <QuickItem $w={50}><Settings size={32} color="#666" strokeWidth={1} /><Caret $ml={9} /></QuickItem>
        </QuickBar>
        <DocTitle>草图1 ← 零件2.SLDP...</DocTitle>
        <SearchBox>
          <Prompt><PromptGlyph /></Prompt>
          <SearchText>搜索命令</SearchText>
          <Search size={22} color="#777" strokeWidth={1.3} />
          <Caret $ml={10} />
        </SearchBox>
        <TitleRight>
          <RoundBtn><UserIcon /></RoundBtn>
          <RoundBtn><HelpMark>?</HelpMark></RoundBtn>
          <MinBar />
          <MaxBox />
        </TitleRight>
      </TitleBar>

      <RibbonRow>
        <Ribbon>
          <SketchGrid>
            {sketchTools.map(([Icon, drop], index) => (
              <ToolCell key={index}>
                <Icon />
                {drop && <Caret $ml={7} />}
              </ToolCell>
            ))}
          </SketchGrid>
          <RibbonBtn $w={61}>
            <IconSlot><ScissorsIcon /></IconSlot>
            <BtnText>剪裁实<br />体(T)</BtnText>
            <BtnCaret><Caret /></BtnCaret>
          </RibbonBtn>
          <RibbonBtn $w={61}>
            <IconSlot><CubeIcon /></IconSlot>
            <BtnText>转换实<br />体引用</BtnText>
            <BtnCaret><Caret /></BtnCaret>
          </RibbonBtn>
          <RibbonBtn $w={44}>
            <IconSlot $tall><OffsetIcon /></IconSlot>
            <BtnText>等距<br />实体</BtnText>
          </RibbonBtn>
          <RibbonBtn $w={44} $off>
            <IconSlot $tall><SurfaceIcon /></IconSlot>
            <BtnText>曲面<br />上偏<br />移</BtnText>
          </RibbonBtn>
          <SmallCol>
            <SmallRow><MirrorIcon />镜向实体</SmallRow>
            <SmallRow><PatternIcon />线性草图阵列<Caret /></SmallRow>
            <SmallRow><MoveIcon />移动实体<Caret /></SmallRow>
          </SmallCol>
          <RibbonBtn $w={87}>
            <IconSlot><RelationIcon /></IconSlot>
            <BtnText>显示/删除<br />几何关系</BtnText>
            <BtnCaret><Caret /></BtnCaret>
          </RibbonBtn>
          <RibbonBtn $w={45} $sep>
            <IconSlot $tall><RepairIcon /></IconSlot>
            <BtnText>修复<br />草图</BtnText>
          </RibbonBtn>
          <RibbonBtn $w={46} $sep>
            <IconSlot><SnapIcon /></IconSlot>
            <BtnText>快速<br />捕捉</BtnText>
            <BtnCaret><Caret /></BtnCaret>
          </RibbonBtn>
          <RibbonBtn $w={48}>
            <IconSlot $tall><QuickSketchIcon /></IconSlot>
            <BtnText>快速<br />草图</BtnText>
          </RibbonBtn>
          <RibbonBtn $w={82}>
            <IconSlot $tall><Instant2DIcon /></IconSlot>
            <BtnText $latin>Instant2D</BtnText>
          </RibbonBtn>
          <RibbonBtn $w={44} $on>
            <IconSlot $tall><ShadedIcon /></IconSlot>
            <BtnText>上色<br />草图<br />轮廓</BtnText>
          </RibbonBtn>
          <RibbonBtn $w={44}>
            <IconSlot $tall><SegmentIcon /></IconSlot>
            <BtnText>线段</BtnText>
          </RibbonBtn>
          <RibbonBtn $w={44}>
            <IconSlot $tall><MirrorIcon bolt /></IconSlot>
            <BtnText>动态<br />镜向<br />实体</BtnText>
          </RibbonBtn>
        </Ribbon>
        <RibbonSide />
      </RibbonRow>

      <TabRow>
        {tabs.map(tab => (
          <Tab key={tab.label} $w={tab.w} $on={tab.on} $size={tab.size}>{tab.label}</Tab>
        ))}
        <HeadsUp>
          <HeadsItem $w={39}><ZoomFitIcon /></HeadsItem>
          <HeadsItem $w={38}><ZoomBoxIcon /></HeadsItem>
          <HeadsItem $w={38}><BinoIcon /></HeadsItem>
          <HeadsItem $w={38}><SectionIcon /></HeadsItem>
          <HeadsItem $w={38}><BinoIcon a /></HeadsItem>
          <HeadsItem $w={54}><OrientIcon /><Caret $ml={9} $light /></HeadsItem>
          <HeadsItem $w={50}><DisplayCubeIcon /><Caret $ml={9} $light /></HeadsItem>
          <HeadsItem $w={53}><EyeIcon /><Caret $ml={9} $light /></HeadsItem>
          <HeadsItem $w={40}><BulbIcon /></HeadsItem>
          <HeadsItem $w={52}><SceneIcon /><Caret $ml={9} $light /></HeadsItem>
          <HeadsItem $w={50}><MonitorIcon /><Caret $ml={9} $light /></HeadsItem>
        </HeadsUp>
        <PaneBtns>
          <PaneBtn />
          <PaneBtn $right />
          <PaneDash />
        </PaneBtns>
      </TabRow>

      <WorkRow>
        <Sidebar>
          <GripRow><GripDot /></GripRow>
          <PaneTabs>
            <PaneTab />
            <PaneTab><TreeIcon /></PaneTab>
            <PaneTab><TargetIcon /></PaneTab>
            <PaneTab><GlobeIcon /></PaneTab>
            <PaneMore><Chevron /></PaneMore>
          </PaneTabs>
          <FilterBox />
          <TreeList>
            {treeRows.map((row, index) => (
              <TreeRow key={index} $shift={row.shift} $track={row.track}>{row.label}</TreeRow>
            ))}
          </TreeList>
          <TreeEnd />
          <HScroll><Chevron /></HScroll>
        </Sidebar>
        <Viewport>
          <SketchCanvas />
        </Viewport>
      </WorkRow>

      <BottomTabs>
        <SheetTab $w={3} />
        <SheetTab $w={70} $on $pl={6}>模型</SheetTab>
        <SheetTab $w={90}>3D 视图</SheetTab>
        <SheetTab $w={127} $pr={8}>运动算例 1</SheetTab>
      </BottomTabs>

      <RelationBar>
        <RelationCell $w={39} $ml={-11}><TangentLine /></RelationCell>
        <RelationCell $w={39}><FourPoint /></RelationCell>
        <RelationCell $w={39}><CrossCurve /></RelationCell>
        <RelationCell $w={39}><Bisect /></RelationCell>
        <RelationSep />
        <RelationCell $w={39}><FadedTangent /></RelationCell>
        <RelationCell $w={39}><FadedPerp /></RelationCell>
        <RelationCell $w={39}><FadedParallel /></RelationCell>
        <RelationCell $w={39}><FadedSquare /></RelationCell>
        <RelationCell $w={39}><DottedL /></RelationCell>
        <RelationSep />
        <RelationCell $w={39}><FadedDim /></RelationCell>
        <RelationCell $w={39}><GridIcon /></RelationCell>
        <RelationCell $w={39}><FadedAngle /></RelationCell>
        <RelationSep $ml={8} />
      </RelationBar>

      <StatusBar>
        <StatusItem $mr={15}>总长度: 218.06mm</StatusItem>
        <StatusItem $mr={19}>完全定义</StatusItem>
        <StatusItem $mr={23}>在编辑 草图1</StatusItem>
        <StatusSep />
        <StatusItem $mr={0}>自定义</StatusItem>
      </StatusBar>
      <TaskEdge />

      <Sash><GripDot /></Sash>
      <Spotlight />
      <Pointer width="22" height="32" viewBox="0 0 22 32">
        <path d="M1 1v24l6-5 4 10 5-2-4-9h8z" fill="#fff" stroke="#333" strokeWidth="1.2" />
      </Pointer>
    </Page>
  );
}

export default App;
